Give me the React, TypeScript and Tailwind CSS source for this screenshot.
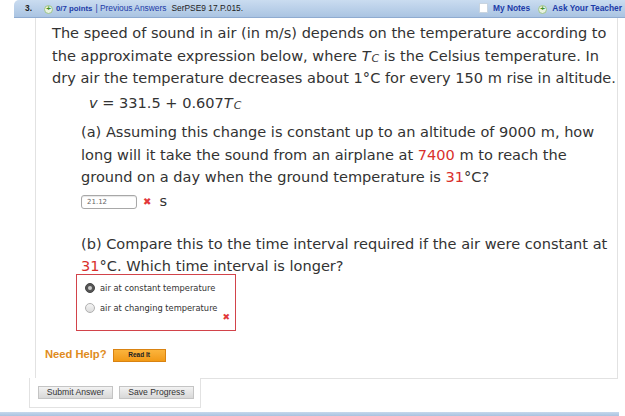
import React from 'react';

const Tc = () => (
  <span className="italic">
    T<sub className="ml-[1px] text-[0.75em] italic relative top-[1px]">C</sub>
  </span>
);

const RedX = ({ className = '' }: { className?: string }) => (
  <span className={`text-[#e2383a] font-bold leading-none ${className}`}>✖</span>
);

const PlusDot = () => (
  <span className="inline-flex w-[9px] h-[9px] rounded-full bg-[#e8f2e0] border border-[#9cc48a] items-center justify-center text-[#3f8f2a] text-[8px] font-bold leading-none">
    +
  </span>
);

export default function App() {
  return (
    <div
      className="w-[625px] h-[416px] bg-white relative overflow-hidden text-[#333]"
      style={{ fontFamily: '"DejaVu Sans", Verdana, sans-serif' }}
    >
      {/* Header */}
      <div
        className="ml-[14px] h-[18px] rounded-tl-[5px] bg-gradient-to-b from-[#cadcf0] to-[#aac4e2] border-b border-[#8fabd0] flex items-center text-[8.4px]"
        style={{ fontFamily: '"Liberation Sans", Arial, sans-serif' }}
      >
        <span className="ml-[11px] font-bold text-[#222]">3.</span>
        <span className="ml-[12px]"><PlusDot /></span>
        <span className="ml-[3px] font-bold text-[7.8px] text-[#1c3ba8]">0/7 points</span>
        <span className="ml-[3px] text-[#1c3ba8]">| Previous Answers</span>
        <span className="ml-[5px] text-[#222]">SerPSE9 17.P.015.</span>
        <div className="ml-auto flex items-center mr-[3px] font-bold">
          <span className="w-[9px] h-[10px] bg-white border border-[#c8d4e0] mr-[5px]" />
          <span className="text-[#1c3ba8]">My Notes</span>
          <span className="ml-[8px]"><PlusDot /></span>
          <span className="ml-[5px] text-[#1c3ba8]">Ask Your Teacher</span>
        </div>
      </div>

      {/* Main content box */}
      <div className="ml-[35px] mr-[7px] border-l border-r border-[#e2e2e2] pl-[16px] pt-[4px] h-[360px] text-[14.55px] leading-[22.5px] whitespace-nowrap">
        <p>
          The speed of sound in air (in m/s) depends on the temperature according to
          <br />
          the approximate expression below, where <Tc /> is the Celsius temperature. In
          <br />
          dry air the temperature decreases about 1°C for every 150 m rise in altitude.
        </p>
        <p className="ml-[37px] mt-[2px]">
          <span className="italic">v</span> = 331.5 + 0.607<Tc />
        </p>

        <div className="ml-[29px] mt-[7px]">
          <p>
            (a) Assuming this change is constant up to an altitude of 9000 m, how
            <br />
            long will it take the sound from an airplane at{' '}
            <span className="text-[#d9302c]">7400</span> m to reach the
            <br />
            ground on a day when the ground temperature is{' '}
            <span className="text-[#d9302c]">31</span>°C?
          </p>
          <div className="flex items-center mt-[3px] h-[20px]">
            <div className="w-[56px] h-[14px] rounded-[3px] border border-[#a8a8a8] bg-white text-[7px] leading-[12px] pl-[5px] text-[#666] shadow-[inset_0_1px_1px_rgba(0,0,0,0.1)]">
              21.12
            </div>
            <RedX className="ml-[6px] text-[10px]" />
            <span className="ml-[8px]">s</span>
          </div>

          <p className="mt-[21px]">
            (b) Compare this to the time interval required if the air were constant at
            <br />
            <span className="text-[#d9302c]">31</span>°C. Which time interval is longer?
          </p>
          <div className="-ml-[5px] -mt-[4px] w-[160px] h-[57px] border border-[#d2434a] pl-[8px] pt-[3px] text-[8.3px] leading-[20px]">
            <div className="flex items-center">
              <span className="w-[10px] h-[10px] rounded-full bg-[#555] border border-[#444] flex items-center justify-center">
                <span className="w-[4px] h-[4px] rounded-full bg-[#ccc]" />
              </span>
              <span className="ml-[5px]">air at constant temperature</span>
            </div>
            <div className="flex items-center">
              <span className="w-[10px] h-[10px] rounded-full bg-gradient-to-b from-[#f4f4f4] to-[#dcdcdc] border border-[#b0b0b0]" />
              <span className="ml-[5px]">air at changing temperature</span>
            </div>
            <div className="flex justify-end pr-[5px] -mt-[5px]">
              <RedX className="text-[9px]" />
            </div>
          </div>
        </div>

        <div
          className="flex items-center mt-[18px] -ml-[7px]"
          style={{ fontFamily: '"Liberation Sans", Arial, sans-serif' }}
        >
          <span className="text-[#e08b1c] font-bold text-[11.2px] leading-none">Need Help?</span>
          <span className="ml-[6px] w-[53px] h-[13px] bg-gradient-to-b from-[#fbb43c] to-[#f29a14] border border-[#d98312] text-[6.5px] font-bold text-[#222] flex items-center justify-center">
            Read It
          </span>
        </div>
      </div>

      {/* Bottom: buttons tab + box bottom border */}
      <div className="flex ml-[29px] mr-[7px]">
        <div
          className="w-[172px] h-[30px] border-l border-r border-b border-[#e2e2e2] flex items-start pt-[8px] pl-[8px] gap-[6px] text-[8.6px] text-[#333]"
          style={{ fontFamily: '"Liberation Sans", Arial, sans-serif' }}
        >
          <span className="w-[75px] h-[13px] bg-gradient-to-b from-[#f2f2f2] to-[#d8d8d8] border border-[#c4c4c4] flex items-center justify-center">
            Submit Answer
          </span>
          <span className="w-[75px] h-[13px] bg-gradient-to-b from-[#f2f2f2] to-[#d8d8d8] border border-[#c4c4c4] flex items-center justify-center">
            Save Progress
          </span>
        </div>
        <div className="flex-1 h-[1px] border-t border-[#e2e2e2]" />
      </div>
      <div className="absolute left-0 right-[6px] bottom-0 h-[4px] bg-gradient-to-b from-[#c6d8ec] to-[#a9c3e0]" />
    </div>
  );
}
